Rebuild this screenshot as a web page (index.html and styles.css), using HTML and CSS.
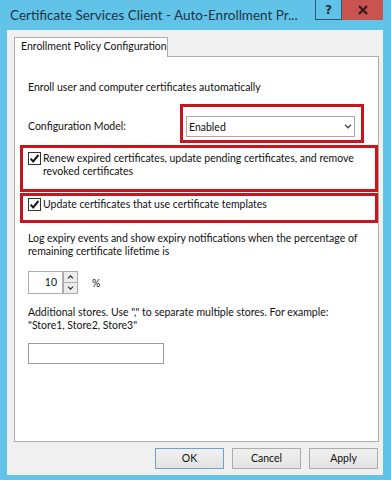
FILE: index.html
```html
<!DOCTYPE html>
<html lang="en">
<head>
    <meta charset="UTF-8">
    <meta name="viewport" content="width=device-width, initial-scale=1.0">
    <title>Certificate Services Client - Auto-Enrollment Properties</title>
    <link rel="stylesheet" href="styles.css">
</head>
<body>
    <div class="window">
        <div class="titlebar">
            <span class="title">Certificate Services Client - Auto-Enrollment Pr...</span>
            <div class="captionButtons">
                <div class="helpButton">?</div>
                <div class="closeButton">
                    <svg width="12" height="10" viewBox="0 0 12 10"><path d="M2 1 L10 9 M10 1 L2 9" stroke="#3a1c1c" stroke-width="2.4" fill="none"/></svg>
                </div>
            </div>
        </div>

        <div class="client">
            <div class="tabs">
                <div class="tab">Enrollment Policy Configuration</div>
            </div>
            <div class="panel">
                <p class="intro">Enroll user and computer certificates automatically</p>

                <div class="configRow">
                    <span class="configLabel">Configuration Model:</span>
                    <div class="highlight comboHighlight">
                        <div class="combo">
                            <span>Enabled</span>
                            <svg width="8" height="5" viewBox="0 0 8 5"><path d="M1 0.8 L4 3.8 L7 0.8" stroke="#444" stroke-width="1.3" fill="none"/></svg>
                        </div>
                    </div>
                </div>

                <div class="highlight checkRow renewRow">
                    <span class="checkbox"><svg width="11" height="11" viewBox="0 0 11 11"><path d="M1.6 5.6 L4.2 8.4 L9.4 2" stroke="#1a1a1a" stroke-width="2" fill="none"/></svg></span>
                    <span>Renew expired certificates, update pending certificates, and remove<br>revoked certificates</span>
                </div>

                <div class="highlight checkRow updateRow">
                    <span class="checkbox"><svg width="11" height="11" viewBox="0 0 11 11"><path d="M1.6 5.6 L4.2 8.4 L9.4 2" stroke="#1a1a1a" stroke-width="2" fill="none"/></svg></span>
                    <span>Update certificates that use certificate templates</span>
                </div>

                <p class="logText">Log expiry events and show expiry notifications when the percentage of<br>remaining certificate lifetime is</p>

                <div class="spinRow">
                    <div class="spinner">
                        <span class="spinValue">10</span>
                        <div class="spinArrows">
                            <span class="spinUp"><svg width="7" height="4" viewBox="0 0 7 4"><path d="M1 3.3 L3.5 0.8 L6 3.3" stroke="#333" stroke-width="1.2" fill="none"/></svg></span>
                            <span class="spinDown"><svg width="7" height="4" viewBox="0 0 7 4"><path d="M1 0.7 L3.5 3.2 L6 0.7" stroke="#333" stroke-width="1.2" fill="none"/></svg></span>
                        </div>
                    </div>
                    <span class="percent">%</span>
                </div>

                <p class="storesText">Additional stores. Use "," to separate multiple stores. For example:<br>"Store1, Store2, Store3"</p>

                <div class="textBox"></div>
            </div>

            <div class="buttons">
                <div class="button defaultButton">OK</div>
                <div class="button">Cancel</div>
                <div class="button">Apply</div>
            </div>
        </div>
    </div>
</body>
</html>
```

FILE: styles.css
```css
        body {
            margin: 0;
            font-family: Lato, "Open Sans", sans-serif;
            font-size: 10.5px;
            color: #111;
        }

        p {
            margin: 0;
        }

        .window {
            width: 391px;
            height: 480px;
            box-sizing: border-box;
            padding: 0 8px 5px 7px;
            background-color: #62c3e9;
            display: flex;
            flex-direction: column;
        }

        .titlebar {
            height: 30px;
            flex-shrink: 0;
            display: flex;
            justify-content: space-between;
            align-items: flex-start;
        }

        .title {
            flex: 1;
            min-width: 0;
            margin: 4px 0 0 3px;
            font-size: 13.5px;
            line-height: 22px;
            color: #1f3446;
            white-space: nowrap;
            overflow: hidden;
        }

        .captionButtons {
            display: flex;
            flex-shrink: 0;
        }

        .helpButton {
            width: 27px;
            height: 20px;
            box-sizing: border-box;
            border: 1px solid #2c5872;
            border-top: none;
            display: flex;
            align-items: center;
            justify-content: center;
            font-family: "DejaVu Sans", sans-serif;
            font-weight: bold;
            font-size: 12px;
            color: #1d2f3c;
        }

        .closeButton {
            width: 41px;
            height: 20px;
            background-color: #c9544f;
            display: flex;
            align-items: center;
            justify-content: center;
        }

        .client {
            flex: 1;
            background-color: #f0f0f0;
            padding: 7px 4px 0 7px;
        }

        .tabs {
            display: flex;
        }

        .tab {
            width: 154px;
            height: 20px;
            box-sizing: border-box;
            border: 1px solid #adadad;
            border-bottom: none;
            background-color: #fff;
            padding-left: 6px;
            line-height: 17px;
            white-space: nowrap;
            margin-bottom: -1px;
            position: relative;
        }

        .panel {
            width: 365px;
            height: 386px;
            box-sizing: border-box;
            border: 1px solid #adadad;
            background-color: #fff;
        }

        .intro {
            margin: 24px 0 0 13px;
            line-height: 13px;
        }

        .configRow {
            display: flex;
            align-items: center;
            margin-top: 10px;
        }

        .configLabel {
            width: 152px;
            margin: 5px 0 0 13px;
            line-height: 13px;
        }

        .highlight {
            border: 3px solid #c8141c;
            box-sizing: border-box;
        }

        .comboHighlight {
            width: 184px;
            padding: 9px 6px 3px 3px;
        }

        .combo {
            height: 21px;
            box-sizing: border-box;
            border: 1px solid #a8a8a8;
            background-color: #fff;
            display: flex;
            align-items: center;
            justify-content: space-between;
            padding: 0 2px 0 2px;
        }

        .checkRow {
            display: flex;
            align-items: flex-start;
            width: 358px;
            margin-left: 5px;
            padding-left: 5px;
            line-height: 13px;
            white-space: nowrap;
        }

        .renewRow {
            height: 47px;
            margin-top: 2px;
            padding-top: 4px;
        }

        .updateRow {
            height: 30px;
            margin-top: 1px;
            padding-top: 2px;
        }

        .checkbox {
            width: 13px;
            height: 13px;
            box-sizing: border-box;
            border: 1px solid #333;
            background-color: #fff;
            margin-right: 2px;
            flex-shrink: 0;
            display: flex;
            align-items: center;
            justify-content: center;
        }

        .logText {
            margin: 9px 0 0 13px;
            line-height: 13px;
            white-space: nowrap;
        }

        .spinRow {
            display: flex;
            align-items: center;
            margin: 13px 0 0 13px;
        }

        .spinner {
            display: flex;
            height: 23px;
        }

        .spinValue {
            width: 35px;
            box-sizing: border-box;
            border: 1px solid #abadb3;
            text-align: right;
            padding-right: 5px;
            line-height: 21px;
        }

        .spinArrows {
            width: 15px;
            display: flex;
            flex-direction: column;
        }

        .spinUp,
        .spinDown {
            flex: 1;
            box-sizing: border-box;
            border: 1px solid #acacac;
            background-color: #ececec;
            display: flex;
            align-items: center;
            justify-content: center;
        }

        .spinDown {
            border-top: none;
        }

        .percent {
            margin-left: 14px;
        }

        .storesText {
            margin: 12px 0 0 13px;
            line-height: 13px;
            white-space: nowrap;
        }

        .textBox {
            width: 136px;
            height: 21px;
            box-sizing: border-box;
            border: 1px solid #9c9c9c;
            margin: 11px 0 0 13px;
        }

        .buttons {
            display: flex;
            justify-content: flex-end;
            gap: 8px;
            margin-top: 6px;
            padding-right: 1px;
        }

        .button {
            width: 69px;
            height: 21px;
            box-sizing: border-box;
            border: 1px solid #acacac;
            background: linear-gradient(#f0f0f0, #e3e3e3);
            text-align: center;
            line-height: 19px;
        }

        .defaultButton {
            border-color: #6f9fd3;
        }
```
